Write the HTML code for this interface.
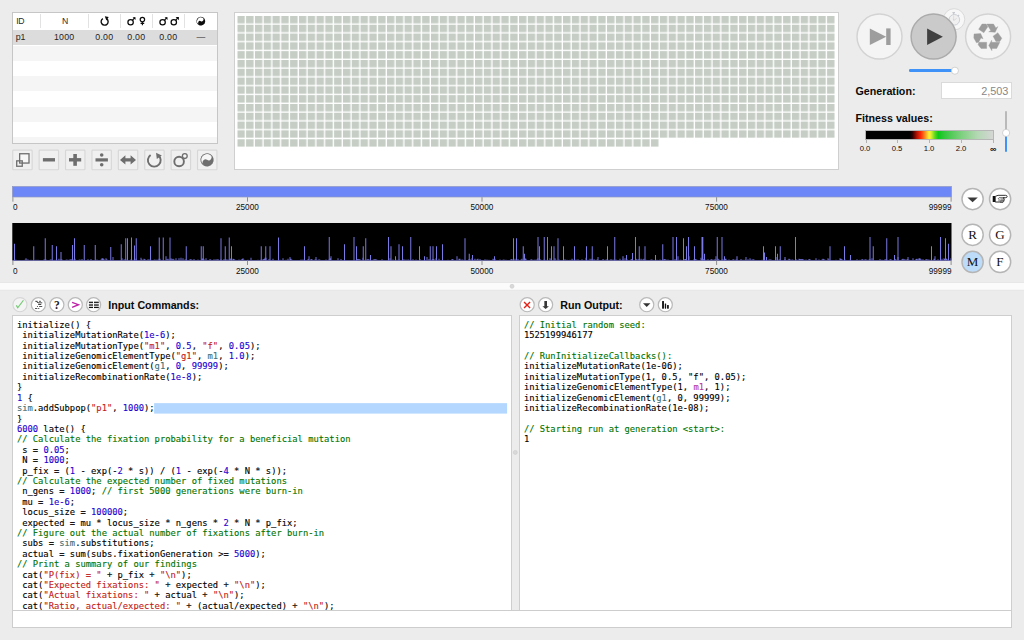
<!DOCTYPE html>
<html lang="en">
<head>
<meta charset="utf-8">
<title>SLiMgui</title>
<style>
*{box-sizing:border-box;margin:0;padding:0}
html,body{width:1024px;height:640px;overflow:hidden;background:#ececec}
body{position:relative;font-family:"Liberation Sans",sans-serif;color:#000;-webkit-font-smoothing:antialiased}
.abs{position:absolute}
/* population table */
#tbl{left:12px;top:12px;width:206px;height:132px;background:#fff;border:1px solid #c6c6c6;overflow:hidden}
#tbl .row{position:absolute;left:0;width:204px;height:15.2px}
#tbl .hd{position:absolute;top:0;height:16.9px;left:0;width:204px;background:#fff}
.colsep{position:absolute;top:1.3px;height:14px;width:1px;background:#e2e2e2}
.hdt{position:absolute;top:0;height:16.9px;line-height:17.4px;font-size:8.7px;letter-spacing:-0.3px;color:#2a2a2a;text-align:center}
.cell{position:absolute;top:0;height:14.7px;line-height:14.4px;font-size:8.8px;letter-spacing:0.2px;color:#1e1e1e;text-align:center}
/* population view */
#pop{left:234px;top:12px;width:605px;height:158px;background:#fff;border:1px solid #cfcfcf}
.lbl{position:absolute;font-weight:bold;font-size:10.7px;color:#0a0a0a;white-space:nowrap}
.tick{position:absolute;font-size:8.2px;color:#0c0c0c;white-space:nowrap;line-height:8px}
.ft{font-size:7.7px}
.pane{position:absolute;background:#fff;border:1px solid #cecece;overflow:hidden}
pre{font-family:"DejaVu Sans Mono","Liberation Mono",monospace;font-size:8.8px;line-height:10.4px;color:#000;position:absolute;left:3.9px;top:3.85px;white-space:pre;-webkit-text-stroke:0.12px}
.n{color:#1c00cf}.s{color:#c41a16}.c{color:#007400}.i{color:#3f6e74}.k{color:#b833a1}

</style>
</head>
<body>
<!-- population table -->
<div id="tbl" class="abs">
  <div class="hd">
    <div class="hdt" style="left:3.2px;width:20px;text-align:left">ID</div>
    <div class="hdt" style="left:28px;width:48px">N</div>
    <div class="colsep" style="left:26.8px"></div>
    <div class="colsep" style="left:74.9px"></div>
    <div class="colsep" style="left:106.9px"></div>
    <div class="colsep" style="left:138.9px"></div>
    <div class="colsep" style="left:170.9px"></div>
  </div>
  <div class="row" style="top:16.9px;height:14.7px;background:#dcdcdc">
    <div class="cell" style="left:2.8px;width:20px;text-align:left;letter-spacing:-0.2px">p1</div>
    <div class="cell" style="left:27.2px;width:48px">1000</div>
    <div class="cell" style="left:75.3px;width:32px">0.00</div>
    <div class="cell" style="left:107.3px;width:32px">0.00</div>
    <div class="cell" style="left:139.3px;width:32px">0.00</div>
    <div class="cell" style="left:172px;width:32px">—</div>
  </div>
  <div class="row" style="top:32.7px;background:#f5f5f5"></div>
  <div class="row" style="top:63.1px;background:#f5f5f5"></div>
  <div class="row" style="top:93.5px;background:#f5f5f5"></div>
  <div class="row" style="top:123.9px;background:#f5f5f5"></div>
</div>
<!-- table header icons -->
<svg class="abs" style="left:0;top:0" width="230" height="180" viewBox="0 0 230 180">
  <g id="hdicons" fill="none" stroke="#0c0c0c" stroke-width="1.35">
    <!-- cloning -->
    <path d="M102.9 18.6A3.5 3.5 0 1 0 106.8 18.9"/>
    <path d="M104.8 16.3l3.9 .8l-2.3 3.3z" fill="#0c0c0c" stroke="none"/>
    <!-- male female -->
    <circle cx="130.6" cy="22.3" r="2.7" stroke-width="1.25"/><path d="M132.4 20.3l2.4-2.6" stroke-width="1.1"/><path d="M132.6 17.2h2.9v2.9z" fill="#0c0c0c" stroke="none"/>
    <circle cx="142.4" cy="19.6" r="2.2" stroke-width="1.2"/><path d="M142.4 21.8v3.4M140.6 23.4h3.6" stroke-width="1.1"/>
    <!-- male male -->
    <circle cx="162.6" cy="22.3" r="2.7" stroke-width="1.25"/><path d="M164.4 20.3l2.4-2.6" stroke-width="1.1"/><path d="M164.6 17.2h2.9v2.9z" fill="#0c0c0c" stroke="none"/>
    <circle cx="173.8" cy="22.3" r="2.7" stroke-width="1.25"/><path d="M175.6 20.3l2.4-2.6" stroke-width="1.1"/><path d="M175.6 17h3.3v3.3z" fill="#0c0c0c" stroke="none"/>
    <!-- yin yang -->
    <g transform="translate(200.85 21.15) rotate(28)" stroke="none"><circle r="4.35" fill="#0c0c0c"/><path d="M0 -3.75A3.75 3.75 0 0 0 0 3.75A1.87 1.87 0 0 1 0 0A1.87 1.87 0 0 0 0 -3.75Z" fill="#fff"/></g>
  </g>
</svg>
<!-- square buttons -->
<svg class="abs" style="left:0;top:140px" width="230" height="40" viewBox="0 140 230 40">
  <rect x="12.75" y="150.1" width="19.4" height="19.65" rx="0.8" fill="#f0f0f0" stroke="#d7d7d7" stroke-width="1.15"/><rect x="39.15" y="150.1" width="19.4" height="19.65" rx="0.8" fill="#f0f0f0" stroke="#d7d7d7" stroke-width="1.15"/><rect x="65.55" y="150.1" width="19.4" height="19.65" rx="0.8" fill="#f0f0f0" stroke="#d7d7d7" stroke-width="1.15"/><rect x="91.95" y="150.1" width="19.4" height="19.65" rx="0.8" fill="#f0f0f0" stroke="#d7d7d7" stroke-width="1.15"/><rect x="118.35" y="150.1" width="19.4" height="19.65" rx="0.8" fill="#f0f0f0" stroke="#d7d7d7" stroke-width="1.15"/><rect x="144.75" y="150.1" width="19.4" height="19.65" rx="0.8" fill="#f0f0f0" stroke="#d7d7d7" stroke-width="1.15"/><rect x="171.15" y="150.1" width="19.4" height="19.65" rx="0.8" fill="#f0f0f0" stroke="#d7d7d7" stroke-width="1.15"/><rect x="197.55" y="150.1" width="19.4" height="19.65" rx="0.8" fill="#f0f0f0" stroke="#d7d7d7" stroke-width="1.15"/>
  <g fill="#6e6e6e" stroke="none">
    <rect x="19.65" y="153.75" width="9.35" height="9.3" fill="#f7f7f7" stroke="#6e6e6e" stroke-width="1.3"/>
    <rect x="16.7" y="160.85" width="5.55" height="5.4" fill="none" stroke="#6e6e6e" stroke-width="1.3"/>
    <rect x="42.9" y="158.1" width="12.1" height="3.4"/>
    <rect x="69" y="158.1" width="12.2" height="3.4"/><rect x="73.3" y="154" width="3.6" height="11.8"/>
    <rect x="95.5" y="158.3" width="12.4" height="3.2"/><circle cx="101.7" cy="155" r="1.8"/><circle cx="101.7" cy="164.7" r="1.8"/>
    <path d="M120 159.9l5.4-4.6v3h5.2v-3l5.4 4.6l-5.4 4.6v-3h-5.2v3z"/>
    <path d="M158.2 155.2A6.4 6.4 0 1 1 150.6 155" fill="none" stroke="#6e6e6e" stroke-width="1.9"/>
    <path d="M156 152.8l5.8 2.6l-5 3.6z"/>
    <circle cx="179.1" cy="161.5" r="4.8" fill="none" stroke="#6e6e6e" stroke-width="1.9"/>
    <circle cx="184.8" cy="156.1" r="2.4" fill="#f6f6f6" stroke="#6e6e6e" stroke-width="1.3"/>
    <g transform="translate(207.07 159.87) rotate(32)" stroke="none"><circle r="6.6" fill="#6e6e6e"/><path d="M0 -5.8A5.8 5.8 0 0 0 0 5.8A2.9 2.9 0 0 1 0 0A2.9 2.9 0 0 0 0 -5.8Z" fill="#f6f6f6"/></g>
  </g>
</svg>
<!-- population squares -->
<div id="pop" class="abs"></div>
<svg class="abs" style="left:234px;top:12px" width="606" height="158" viewBox="234 12 606 158">
  <defs><pattern id="sqp" x="237.3" y="15.95" width="8.803" height="8.8" patternUnits="userSpaceOnUse"><rect x="0" y="0" width="7.45" height="7.45" fill="#c5cdc5"/></pattern></defs>
  <rect x="237.3" y="15.95" width="597.6" height="122" fill="url(#sqp)"/>
  <rect x="237.3" y="139.15" width="421.6" height="8" fill="url(#sqp)"/>
</svg>
<!-- big round buttons -->
<svg class="abs" style="left:850px;top:0px" width="170" height="68" viewBox="850 0 170 68">
  <circle cx="954.1" cy="19.3" r="10.65" fill="#f7f7f7" stroke="#dadada" stroke-width="1"/>
  <g fill="none" stroke="#c6c9d0" stroke-width="0.9"><circle cx="954.3" cy="19.8" r="5.3" fill="#f0f0f1"/><path d="M953.6 14.6v-1.6M958 16.1l1.1-1.1" stroke-width="1.1"/><path d="M952.4 12.6h2.6" stroke-width="1.3"/><path d="M953.6 15.6v5.4" stroke="#f3c2ba" stroke-width="0.55"/><path d="M954.5 20l2.2-1.7M954.5 20l-1.7-.9" stroke="#c9c9cc" stroke-width="0.6"/></g>
  <circle cx="879.5" cy="36.6" r="22.5" fill="#f4f4f4" stroke="#d3d3d3" stroke-width="1.5"/>
  <circle cx="933.6" cy="36.6" r="22.5" fill="#cacaca" stroke="#ababab" stroke-width="1.5"/>
  <circle cx="988.1" cy="36.6" r="22.5" fill="#f4f4f4" stroke="#d3d3d3" stroke-width="1.5"/>
  <path d="M869.8 28.4l16.4 8.3l-16.4 8.3z" fill="#9d9d9d"/><rect x="886.2" y="28.4" width="4.4" height="16.6" fill="#9d9d9d"/>
  <path d="M927.1 28.4l15.8 8.3l-15.8 8.3z" fill="#404040"/>
  <g id="recyc" fill="#9c9c9c" stroke="#9c9c9c" stroke-width="4" stroke-linejoin="round" transform="translate(960 8) scale(0.0875)">
    <polygon points="213,243 252,183 298,183 318,215 272,283"/>
    <polygon points="305,183 383,183 410,228 433,212 402,278 328,272 352,258"/>
    <polygon points="432,282 478,345 455,382 410,382 378,322"/>
    <polygon points="362,368 362,392 455,392 420,462 365,462 365,488 328,428"/>
    <polygon points="160,296 236,292 264,352 240,343 213,390 188,398 158,342"/>
    <polygon points="215,392 305,392 305,462 240,462 207,420"/>
  </g>
</svg>
<!-- speed slider -->
<div class="abs" style="left:909px;top:69.4px;width:44px;height:2.4px;border-radius:1.2px;background:#3f92f7"></div>
<svg class="abs" style="left:948px;top:64px" width="14" height="14" viewBox="948 64 14 14"><circle cx="954.9" cy="70.7" r="3.55" fill="#fff" stroke="#c2c2c2" stroke-width=".7"/></svg>
<!-- generation -->
<div class="lbl" style="left:855.5px;top:84.5px;line-height:13px">Generation:</div>
<div class="abs" style="left:941px;top:82px;width:71px;height:17px;background:#fff;border:1px solid #dadada"></div>
<div class="abs" style="left:945px;top:83.5px;width:63.4px;text-align:right;font-size:10.9px;line-height:14px;color:#878787">2,503</div>
<div class="lbl" style="left:855.5px;top:111.5px;line-height:13px">Fitness values:</div>
<!-- fitness colour bar -->
<div class="abs" style="left:865px;top:130.2px;width:128.9px;height:9.6px;border:1px solid #b6b6b6;background:linear-gradient(to right,#000 0%,#000 34.5%,#2c0000 36.5%,#b41000 40%,#ff2a08 43.2%,#ff9220 46.5%,#fff234 49.6%,#dcf030 51.2%,#5cd820 54.2%,#0cc818 57%,#36c83e 62%,#7ed07e 75%,#b4d8b4 88%,#d4d6d4 100%)"></div>
<div class="abs" style="left:865.6px;top:139.5px;width:1px;height:3.4px;background:#b0b0b0"></div>
<div class="abs" style="left:897px;top:139.5px;width:1px;height:3.4px;background:#b4b4b4"></div>
<div class="abs" style="left:929px;top:139.5px;width:1px;height:3.4px;background:#b4b4b4"></div>
<div class="abs" style="left:961px;top:139.5px;width:1px;height:3.4px;background:#b4b4b4"></div>
<div class="abs" style="left:993px;top:139.5px;width:1px;height:3.4px;background:#b4b4b4"></div>
<div class="tick ft" style="left:855px;top:145.1px;width:20px;text-align:center">0.0</div>
<div class="tick ft" style="left:887px;top:145.1px;width:20px;text-align:center">0.5</div>
<div class="tick ft" style="left:919px;top:145.1px;width:20px;text-align:center">1.0</div>
<div class="tick ft" style="left:951px;top:145.1px;width:20px;text-align:center">2.0</div>
<div class="tick" style="left:983.2px;top:145.3px;width:20px;text-align:center;font-size:9px;font-weight:bold">∞</div>
<!-- fitness vertical slider -->
<div class="abs" style="left:1005px;top:111px;width:2.2px;height:22px;border-radius:1px;background:#b9b9b9"></div>
<div class="abs" style="left:1005px;top:133px;width:2.2px;height:19px;border-radius:1px;background:#3f92f7"></div>
<svg class="abs" style="left:999px;top:126px" width="14" height="14" viewBox="999 126 14 14"><circle cx="1006.1" cy="132.9" r="3.6" fill="#fff" stroke="#c2c2c2" stroke-width=".7"/></svg>
<!-- chromosome overview -->
<svg class="abs" style="left:0;top:180px" width="1024" height="95" viewBox="0 180 1024 95"><rect x="12.4" y="186.5" width="939.2" height="10.5" fill="#6e87f8" stroke="#8f98c0" stroke-width="0.7"/><rect x="12.3" y="223" width="939.2" height="37.6" fill="#000"/><path fill="#7b79e4" d="M14.00 243.75v16.75h1v-16.75zM33.25 246.25v14.25h1v-14.25zM44.75 238.25v22.25h1v-22.25zM51.75 245.00v15.50h1v-15.50zM56.00 246.25v14.25h1v-14.25zM60.50 252.00v8.50h1v-8.50zM72.00 245.00v15.50h1v-15.50zM74.00 238.25v22.25h1v-22.25zM83.75 245.00v15.50h1v-15.50zM94.75 245.00v15.50h1v-15.50zM110.25 247.00v13.50h1v-13.50zM120.75 244.25v16.25h1v-16.25zM125.25 238.25v22.25h1v-22.25zM127.00 238.25v22.25h1v-22.25zM131.00 237.50v23.00h1v-23.00zM134.00 245.50v15.00h1v-15.00zM135.75 238.25v22.25h1v-22.25zM150.00 246.25v14.25h1v-14.25zM158.75 237.50v23.00h1v-23.00zM162.75 237.50v23.00h1v-23.00zM169.50 237.50v23.00h1v-23.00zM185.75 246.25v14.25h1v-14.25zM200.75 246.25v14.25h1v-14.25zM202.75 246.25v14.25h1v-14.25zM220.50 238.25v22.25h1v-22.25zM224.75 246.25v14.25h1v-14.25zM228.75 237.50v23.00h1v-23.00zM231.00 246.25v14.25h1v-14.25zM260.75 246.25v14.25h1v-14.25zM265.25 246.25v14.25h1v-14.25zM269.50 246.25v14.25h1v-14.25zM278.00 237.50v23.00h1v-23.00zM304.00 246.25v14.25h1v-14.25zM328.75 237.00v23.50h1v-23.50zM344.00 244.25v16.25h1v-16.25zM353.50 237.00v23.50h1v-23.50zM356.00 246.25v14.25h1v-14.25zM362.75 246.25v14.25h1v-14.25zM365.25 238.25v22.25h1v-22.25zM370.00 255.00v5.50h1v-5.50zM388.00 237.00v23.50h1v-23.50zM390.50 246.25v14.25h1v-14.25zM395.00 256.25v4.25h1v-4.25zM398.50 244.25v16.25h1v-16.25zM402.00 246.25v14.25h1v-14.25zM410.25 237.00v23.50h1v-23.50zM419.00 246.25v14.25h1v-14.25zM424.00 256.25v4.25h1v-4.25zM429.75 246.25v14.25h1v-14.25zM432.50 246.25v14.25h1v-14.25zM436.00 246.25v14.25h1v-14.25zM442.00 244.25v16.25h1v-16.25zM464.50 238.25v22.25h1v-22.25zM468.75 253.75v6.75h1v-6.75zM472.00 255.00v5.50h1v-5.50zM494.00 256.25v4.25h1v-4.25zM513.00 238.25v22.25h1v-22.25zM516.00 238.25v22.25h1v-22.25zM522.75 246.25v14.25h1v-14.25zM524.00 253.75v6.75h1v-6.75zM537.50 237.00v23.50h1v-23.50zM539.00 246.25v14.25h1v-14.25zM543.75 237.00v23.50h1v-23.50zM547.00 237.00v23.50h1v-23.50zM551.00 246.25v14.25h1v-14.25zM553.50 246.25v14.25h1v-14.25zM557.50 238.25v22.25h1v-22.25zM563.00 246.25v14.25h1v-14.25zM574.00 246.25v14.25h1v-14.25zM586.00 246.25v14.25h1v-14.25zM591.75 246.25v14.25h1v-14.25zM607.00 246.25v14.25h1v-14.25zM614.25 237.00v23.50h1v-23.50zM622.50 256.25v4.25h1v-4.25zM626.00 255.00v5.50h1v-5.50zM632.00 253.00v7.50h1v-7.50zM635.00 237.00v23.50h1v-23.50zM638.75 246.25v14.25h1v-14.25zM644.50 246.25v14.25h1v-14.25zM655.00 255.00v5.50h1v-5.50zM662.25 244.25v16.25h1v-16.25zM672.50 237.00v23.50h1v-23.50zM676.00 237.00v23.50h1v-23.50zM683.00 238.25v22.25h1v-22.25zM686.00 246.25v14.25h1v-14.25zM688.00 237.00v23.50h1v-23.50zM694.00 246.25v14.25h1v-14.25zM701.50 237.00v23.50h1v-23.50zM702.30 237.00v23.50h1v-23.50zM704.00 253.75v6.75h1v-6.75zM716.75 237.00v23.50h1v-23.50zM721.50 237.00v23.50h1v-23.50zM724.00 256.25v4.25h1v-4.25zM736.50 256.25v4.25h1v-4.25zM763.00 246.25v14.25h1v-14.25zM764.00 252.50v8.00h1v-8.00zM766.00 257.00v3.50h1v-3.50zM775.00 246.25v14.25h1v-14.25zM777.00 253.75v6.75h1v-6.75zM779.75 246.25v14.25h1v-14.25zM784.50 257.00v3.50h1v-3.50zM795.00 237.00v23.50h1v-23.50zM829.50 246.25v14.25h1v-14.25zM844.00 246.25v14.25h1v-14.25zM850.00 255.00v5.50h1v-5.50zM869.50 237.00v23.50h1v-23.50zM872.75 246.25v14.25h1v-14.25zM886.25 238.25v22.25h1v-22.25zM894.00 255.00v5.50h1v-5.50zM897.50 237.00v23.50h1v-23.50zM931.00 246.25v14.25h1v-14.25zM940.00 237.00v23.50h1v-23.50zM945.00 238.25v22.25h1v-22.25zM948.00 243.75v16.75h1v-16.75z"/><path fill="#6f6dd6" d="M12.5 260.5L12.5 259.95L13.5 259.95L13.5 259.95L14.5 259.95L14.5 259.70L15.5 259.70L15.5 259.70L16.5 259.70L16.5 259.95L17.5 259.95L17.5 259.95L18.5 259.95L18.5 259.95L19.5 259.95L19.5 259.95L20.5 259.95L20.5 259.95L21.5 259.95L21.5 259.95L22.5 259.95L22.5 259.95L23.5 259.95L23.5 259.95L24.5 259.95L24.5 259.70L25.5 259.70L25.5 258.30L26.5 258.30L26.5 259.70L27.5 259.70L27.5 259.50L28.5 259.50L28.5 259.95L29.5 259.95L29.5 259.95L30.5 259.95L30.5 259.70L31.5 259.70L31.5 259.95L32.5 259.95L32.5 259.95L33.5 259.95L33.5 259.95L34.5 259.95L34.5 259.95L35.5 259.95L35.5 259.70L36.5 259.70L36.5 259.95L37.5 259.95L37.5 259.70L38.5 259.70L38.5 259.95L39.5 259.95L39.5 259.95L40.5 259.95L40.5 259.95L41.5 259.95L41.5 259.95L42.5 259.95L42.5 259.95L43.5 259.95L43.5 259.50L44.5 259.50L44.5 259.50L45.5 259.50L45.5 259.50L46.5 259.50L46.5 259.95L47.5 259.95L47.5 259.95L48.5 259.95L48.5 259.95L49.5 259.95L49.5 259.70L50.5 259.70L50.5 259.30L51.5 259.30L51.5 259.95L52.5 259.95L52.5 259.95L53.5 259.95L53.5 259.95L54.5 259.95L54.5 259.70L55.5 259.70L55.5 259.95L56.5 259.95L56.5 259.95L57.5 259.95L57.5 259.70L58.5 259.70L58.5 258.70L59.5 258.70L59.5 259.95L60.5 259.95L60.5 259.30L61.5 259.30L61.5 259.50L62.5 259.50L62.5 259.95L63.5 259.95L63.5 259.95L64.5 259.95L64.5 259.95L65.5 259.95L65.5 259.70L66.5 259.70L66.5 259.50L67.5 259.50L67.5 259.95L68.5 259.95L68.5 259.70L69.5 259.70L69.5 259.50L70.5 259.50L70.5 259.30L71.5 259.30L71.5 259.50L72.5 259.50L72.5 259.30L73.5 259.30L73.5 259.95L74.5 259.95L74.5 258.70L75.5 258.70L75.5 259.95L76.5 259.95L76.5 259.95L77.5 259.95L77.5 259.95L78.5 259.95L78.5 259.70L79.5 259.70L79.5 259.50L80.5 259.50L80.5 259.95L81.5 259.95L81.5 259.00L82.5 259.00L82.5 259.95L83.5 259.95L83.5 259.95L84.5 259.95L84.5 259.95L85.5 259.95L85.5 259.95L86.5 259.95L86.5 259.95L87.5 259.95L87.5 259.30L88.5 259.30L88.5 259.95L89.5 259.95L89.5 259.95L90.5 259.95L90.5 259.00L91.5 259.00L91.5 259.95L92.5 259.95L92.5 259.95L93.5 259.95L93.5 259.95L94.5 259.95L94.5 259.95L95.5 259.95L95.5 259.95L96.5 259.95L96.5 259.50L97.5 259.50L97.5 259.95L98.5 259.95L98.5 259.95L99.5 259.95L99.5 259.95L100.5 259.95L100.5 259.50L101.5 259.50L101.5 258.30L102.5 258.30L102.5 258.30L103.5 258.30L103.5 259.30L104.5 259.30L104.5 259.95L105.5 259.95L105.5 258.30L106.5 258.30L106.5 259.50L107.5 259.50L107.5 259.95L108.5 259.95L108.5 259.95L109.5 259.95L109.5 259.95L110.5 259.95L110.5 259.95L111.5 259.95L111.5 259.95L112.5 259.95L112.5 257.10L113.5 257.10L113.5 259.95L114.5 259.95L114.5 259.95L115.5 259.95L115.5 259.95L116.5 259.95L116.5 259.95L117.5 259.95L117.5 259.95L118.5 259.95L118.5 259.95L119.5 259.95L119.5 259.95L120.5 259.95L120.5 259.95L121.5 259.95L121.5 258.30L122.5 258.30L122.5 259.95L123.5 259.95L123.5 259.50L124.5 259.50L124.5 259.50L125.5 259.50L125.5 259.95L126.5 259.95L126.5 259.50L127.5 259.50L127.5 259.95L128.5 259.95L128.5 259.95L129.5 259.95L129.5 259.95L130.5 259.95L130.5 259.30L131.5 259.30L131.5 259.95L132.5 259.95L132.5 259.70L133.5 259.70L133.5 259.95L134.5 259.95L134.5 259.95L135.5 259.95L135.5 258.70L136.5 258.70L136.5 259.95L137.5 259.95L137.5 259.95L138.5 259.95L138.5 259.95L139.5 259.95L139.5 259.95L140.5 259.95L140.5 257.70L141.5 257.70L141.5 259.50L142.5 259.50L142.5 259.95L143.5 259.95L143.5 258.70L144.5 258.70L144.5 259.30L145.5 259.30L145.5 259.95L146.5 259.95L146.5 259.95L147.5 259.95L147.5 259.30L148.5 259.30L148.5 259.70L149.5 259.70L149.5 259.50L150.5 259.50L150.5 259.70L151.5 259.70L151.5 259.95L152.5 259.95L152.5 259.95L153.5 259.95L153.5 259.70L154.5 259.70L154.5 259.50L155.5 259.50L155.5 259.95L156.5 259.95L156.5 259.50L157.5 259.50L157.5 259.95L158.5 259.95L158.5 258.70L159.5 258.70L159.5 258.70L160.5 258.70L160.5 259.95L161.5 259.95L161.5 259.95L162.5 259.95L162.5 259.95L163.5 259.95L163.5 259.95L164.5 259.95L164.5 259.95L165.5 259.95L165.5 256.30L166.5 256.30L166.5 259.50L167.5 259.50L167.5 258.70L168.5 258.70L168.5 259.70L169.5 259.70L169.5 259.70L170.5 259.70L170.5 258.30L171.5 258.30L171.5 259.50L172.5 259.50L172.5 258.70L173.5 258.70L173.5 259.50L174.5 259.50L174.5 259.95L175.5 259.95L175.5 258.30L176.5 258.30L176.5 259.95L177.5 259.95L177.5 259.95L178.5 259.95L178.5 258.30L179.5 258.30L179.5 259.95L180.5 259.95L180.5 257.70L181.5 257.70L181.5 259.95L182.5 259.95L182.5 258.30L183.5 258.30L183.5 259.95L184.5 259.95L184.5 259.50L185.5 259.50L185.5 259.50L186.5 259.50L186.5 259.95L187.5 259.95L187.5 259.95L188.5 259.95L188.5 259.95L189.5 259.95L189.5 259.30L190.5 259.30L190.5 259.30L191.5 259.30L191.5 259.70L192.5 259.70L192.5 259.95L193.5 259.95L193.5 259.00L194.5 259.00L194.5 259.95L195.5 259.95L195.5 259.95L196.5 259.95L196.5 259.95L197.5 259.95L197.5 259.50L198.5 259.50L198.5 259.95L199.5 259.95L199.5 259.95L200.5 259.95L200.5 259.95L201.5 259.95L201.5 258.70L202.5 258.70L202.5 258.30L203.5 258.30L203.5 259.30L204.5 259.30L204.5 259.95L205.5 259.95L205.5 258.30L206.5 258.30L206.5 259.95L207.5 259.95L207.5 259.95L208.5 259.95L208.5 259.95L209.5 259.95L209.5 259.00L210.5 259.00L210.5 259.70L211.5 259.70L211.5 259.95L212.5 259.95L212.5 259.95L213.5 259.95L213.5 259.30L214.5 259.30L214.5 259.95L215.5 259.95L215.5 259.30L216.5 259.30L216.5 259.70L217.5 259.70L217.5 259.00L218.5 259.00L218.5 259.95L219.5 259.95L219.5 259.95L220.5 259.95L220.5 259.30L221.5 259.30L221.5 259.95L222.5 259.95L222.5 259.95L223.5 259.95L223.5 259.00L224.5 259.00L224.5 259.95L225.5 259.95L225.5 259.30L226.5 259.30L226.5 259.70L227.5 259.70L227.5 259.50L228.5 259.50L228.5 259.95L229.5 259.95L229.5 259.30L230.5 259.30L230.5 258.30L231.5 258.30L231.5 259.95L232.5 259.95L232.5 258.70L233.5 258.70L233.5 259.00L234.5 259.00L234.5 259.70L235.5 259.70L235.5 259.95L236.5 259.95L236.5 259.95L237.5 259.95L237.5 259.95L238.5 259.95L238.5 259.50L239.5 259.50L239.5 259.95L240.5 259.95L240.5 259.70L241.5 259.70L241.5 259.00L242.5 259.00L242.5 258.30L243.5 258.30L243.5 259.70L244.5 259.70L244.5 259.95L245.5 259.95L245.5 259.95L246.5 259.95L246.5 259.95L247.5 259.95L247.5 259.70L248.5 259.70L248.5 259.95L249.5 259.95L249.5 259.95L250.5 259.95L250.5 257.70L251.5 257.70L251.5 259.95L252.5 259.95L252.5 259.95L253.5 259.95L253.5 259.95L254.5 259.95L254.5 259.95L255.5 259.95L255.5 259.95L256.5 259.95L256.5 259.95L257.5 259.95L257.5 259.70L258.5 259.70L258.5 259.95L259.5 259.95L259.5 259.95L260.5 259.95L260.5 259.50L261.5 259.50L261.5 259.95L262.5 259.95L262.5 259.30L263.5 259.30L263.5 259.00L264.5 259.00L264.5 257.70L265.5 257.70L265.5 257.70L266.5 257.70L266.5 259.95L267.5 259.95L267.5 259.95L268.5 259.95L268.5 259.00L269.5 259.00L269.5 259.95L270.5 259.95L270.5 259.95L271.5 259.95L271.5 259.95L272.5 259.95L272.5 258.70L273.5 258.70L273.5 259.95L274.5 259.95L274.5 259.95L275.5 259.95L275.5 259.95L276.5 259.95L276.5 259.95L277.5 259.95L277.5 259.95L278.5 259.95L278.5 259.95L279.5 259.95L279.5 259.70L280.5 259.70L280.5 259.95L281.5 259.95L281.5 259.95L282.5 259.95L282.5 258.30L283.5 258.30L283.5 259.95L284.5 259.95L284.5 259.95L285.5 259.95L285.5 259.70L286.5 259.70L286.5 259.95L287.5 259.95L287.5 258.70L288.5 258.70L288.5 259.95L289.5 259.95L289.5 257.10L290.5 257.10L290.5 258.70L291.5 258.70L291.5 259.70L292.5 259.70L292.5 259.95L293.5 259.95L293.5 259.95L294.5 259.95L294.5 259.95L295.5 259.95L295.5 259.95L296.5 259.95L296.5 259.95L297.5 259.95L297.5 259.95L298.5 259.95L298.5 259.95L299.5 259.95L299.5 259.95L300.5 259.95L300.5 259.50L301.5 259.50L301.5 259.95L302.5 259.95L302.5 259.50L303.5 259.50L303.5 259.95L304.5 259.95L304.5 259.95L305.5 259.95L305.5 259.95L306.5 259.95L306.5 259.95L307.5 259.95L307.5 259.30L308.5 259.30L308.5 256.30L309.5 256.30L309.5 259.95L310.5 259.95L310.5 259.00L311.5 259.00L311.5 259.30L312.5 259.30L312.5 259.95L313.5 259.95L313.5 259.95L314.5 259.95L314.5 259.50L315.5 259.50L315.5 257.10L316.5 257.10L316.5 259.70L317.5 259.70L317.5 259.95L318.5 259.95L318.5 259.30L319.5 259.30L319.5 259.70L320.5 259.70L320.5 259.95L321.5 259.95L321.5 259.95L322.5 259.95L322.5 259.95L323.5 259.95L323.5 259.95L324.5 259.95L324.5 259.95L325.5 259.95L325.5 259.50L326.5 259.50L326.5 259.95L327.5 259.95L327.5 259.95L328.5 259.95L328.5 259.50L329.5 259.50L329.5 258.30L330.5 258.30L330.5 256.30L331.5 256.30L331.5 259.95L332.5 259.95L332.5 259.95L333.5 259.95L333.5 259.95L334.5 259.95L334.5 259.95L335.5 259.95L335.5 259.95L336.5 259.95L336.5 259.95L337.5 259.95L337.5 258.30L338.5 258.30L338.5 259.95L339.5 259.95L339.5 259.95L340.5 259.95L340.5 259.00L341.5 259.00L341.5 259.95L342.5 259.95L342.5 259.95L343.5 259.95L343.5 259.95L344.5 259.95L344.5 259.95L345.5 259.95L345.5 259.95L346.5 259.95L346.5 259.95L347.5 259.95L347.5 259.95L348.5 259.95L348.5 259.95L349.5 259.95L349.5 259.95L350.5 259.95L350.5 259.95L351.5 259.95L351.5 259.95L352.5 259.95L352.5 259.95L353.5 259.95L353.5 259.95L354.5 259.95L354.5 259.95L355.5 259.95L355.5 259.95L356.5 259.95L356.5 259.30L357.5 259.30L357.5 259.00L358.5 259.00L358.5 259.30L359.5 259.30L359.5 259.30L360.5 259.30L360.5 259.95L361.5 259.95L361.5 259.95L362.5 259.95L362.5 257.70L363.5 257.70L363.5 259.95L364.5 259.95L364.5 259.70L365.5 259.70L365.5 259.95L366.5 259.95L366.5 259.30L367.5 259.30L367.5 259.30L368.5 259.30L368.5 259.30L369.5 259.30L369.5 259.95L370.5 259.95L370.5 259.95L371.5 259.95L371.5 259.95L372.5 259.95L372.5 259.70L373.5 259.70L373.5 259.30L374.5 259.30L374.5 259.30L375.5 259.30L375.5 259.30L376.5 259.30L376.5 259.70L377.5 259.70L377.5 259.95L378.5 259.95L378.5 259.95L379.5 259.95L379.5 259.95L380.5 259.95L380.5 259.95L381.5 259.95L381.5 259.30L382.5 259.30L382.5 259.95L383.5 259.95L383.5 259.95L384.5 259.95L384.5 259.95L385.5 259.95L385.5 259.95L386.5 259.95L386.5 259.95L387.5 259.95L387.5 259.95L388.5 259.95L388.5 259.95L389.5 259.95L389.5 258.30L390.5 258.30L390.5 259.95L391.5 259.95L391.5 259.95L392.5 259.95L392.5 259.50L393.5 259.50L393.5 259.95L394.5 259.95L394.5 259.95L395.5 259.95L395.5 259.95L396.5 259.95L396.5 259.70L397.5 259.70L397.5 259.95L398.5 259.95L398.5 259.50L399.5 259.50L399.5 259.95L400.5 259.95L400.5 259.95L401.5 259.95L401.5 259.95L402.5 259.95L402.5 259.70L403.5 259.70L403.5 259.30L404.5 259.30L404.5 259.95L405.5 259.95L405.5 259.50L406.5 259.50L406.5 259.95L407.5 259.95L407.5 259.50L408.5 259.50L408.5 259.70L409.5 259.70L409.5 259.95L410.5 259.95L410.5 259.95L411.5 259.95L411.5 259.95L412.5 259.95L412.5 259.30L413.5 259.30L413.5 259.95L414.5 259.95L414.5 259.95L415.5 259.95L415.5 259.50L416.5 259.50L416.5 259.95L417.5 259.95L417.5 259.95L418.5 259.95L418.5 259.95L419.5 259.95L419.5 259.00L420.5 259.00L420.5 259.95L421.5 259.95L421.5 259.95L422.5 259.95L422.5 259.95L423.5 259.95L423.5 259.95L424.5 259.95L424.5 259.95L425.5 259.95L425.5 259.95L426.5 259.95L426.5 257.10L427.5 257.10L427.5 259.95L428.5 259.95L428.5 259.00L429.5 259.00L429.5 259.95L430.5 259.95L430.5 259.95L431.5 259.95L431.5 259.50L432.5 259.50L432.5 259.00L433.5 259.00L433.5 259.30L434.5 259.30L434.5 259.95L435.5 259.95L435.5 258.30L436.5 258.30L436.5 259.95L437.5 259.95L437.5 259.95L438.5 259.95L438.5 258.70L439.5 258.70L439.5 259.95L440.5 259.95L440.5 259.95L441.5 259.95L441.5 259.95L442.5 259.95L442.5 259.95L443.5 259.95L443.5 259.95L444.5 259.95L444.5 259.95L445.5 259.95L445.5 259.95L446.5 259.95L446.5 259.95L447.5 259.95L447.5 259.70L448.5 259.70L448.5 259.95L449.5 259.95L449.5 259.95L450.5 259.95L450.5 259.95L451.5 259.95L451.5 259.00L452.5 259.00L452.5 259.30L453.5 259.30L453.5 259.95L454.5 259.95L454.5 259.95L455.5 259.95L455.5 259.95L456.5 259.95L456.5 256.30L457.5 256.30L457.5 259.95L458.5 259.95L458.5 258.70L459.5 258.70L459.5 258.70L460.5 258.70L460.5 259.95L461.5 259.95L461.5 259.50L462.5 259.50L462.5 259.70L463.5 259.70L463.5 259.95L464.5 259.95L464.5 259.95L465.5 259.95L465.5 259.95L466.5 259.95L466.5 259.95L467.5 259.95L467.5 259.95L468.5 259.95L468.5 259.00L469.5 259.00L469.5 259.30L470.5 259.30L470.5 259.95L471.5 259.95L471.5 258.30L472.5 258.30L472.5 259.95L473.5 259.95L473.5 259.70L474.5 259.70L474.5 258.70L475.5 258.70L475.5 259.95L476.5 259.95L476.5 259.30L477.5 259.30L477.5 258.70L478.5 258.70L478.5 259.95L479.5 259.95L479.5 259.00L480.5 259.00L480.5 259.95L481.5 259.95L481.5 259.95L482.5 259.95L482.5 259.95L483.5 259.95L483.5 259.95L484.5 259.95L484.5 259.30L485.5 259.30L485.5 259.95L486.5 259.95L486.5 259.50L487.5 259.50L487.5 259.95L488.5 259.95L488.5 259.70L489.5 259.70L489.5 259.95L490.5 259.95L490.5 259.95L491.5 259.95L491.5 259.95L492.5 259.95L492.5 258.70L493.5 258.70L493.5 259.50L494.5 259.50L494.5 258.70L495.5 258.70L495.5 259.95L496.5 259.95L496.5 259.95L497.5 259.95L497.5 259.95L498.5 259.95L498.5 259.95L499.5 259.95L499.5 259.50L500.5 259.50L500.5 259.95L501.5 259.95L501.5 259.95L502.5 259.95L502.5 259.70L503.5 259.70L503.5 259.50L504.5 259.50L504.5 259.95L505.5 259.95L505.5 259.70L506.5 259.70L506.5 259.95L507.5 259.95L507.5 259.95L508.5 259.95L508.5 259.95L509.5 259.95L509.5 259.95L510.5 259.95L510.5 259.00L511.5 259.00L511.5 259.30L512.5 259.30L512.5 259.70L513.5 259.70L513.5 259.95L514.5 259.95L514.5 258.70L515.5 258.70L515.5 259.95L516.5 259.95L516.5 259.95L517.5 259.95L517.5 259.00L518.5 259.00L518.5 259.95L519.5 259.95L519.5 259.95L520.5 259.95L520.5 259.50L521.5 259.50L521.5 258.70L522.5 258.70L522.5 259.95L523.5 259.95L523.5 259.95L524.5 259.95L524.5 258.30L525.5 258.30L525.5 258.70L526.5 258.70L526.5 259.95L527.5 259.95L527.5 259.95L528.5 259.95L528.5 259.95L529.5 259.95L529.5 259.95L530.5 259.95L530.5 259.30L531.5 259.30L531.5 259.50L532.5 259.50L532.5 259.95L533.5 259.95L533.5 259.70L534.5 259.70L534.5 259.70L535.5 259.70L535.5 259.70L536.5 259.70L536.5 259.50L537.5 259.50L537.5 258.30L538.5 258.30L538.5 259.95L539.5 259.95L539.5 259.30L540.5 259.30L540.5 259.70L541.5 259.70L541.5 259.95L542.5 259.95L542.5 259.95L543.5 259.95L543.5 259.50L544.5 259.50L544.5 259.95L545.5 259.95L545.5 259.70L546.5 259.70L546.5 259.95L547.5 259.95L547.5 259.95L548.5 259.95L548.5 259.95L549.5 259.95L549.5 258.30L550.5 258.30L550.5 259.70L551.5 259.70L551.5 259.95L552.5 259.95L552.5 259.95L553.5 259.95L553.5 259.95L554.5 259.95L554.5 258.30L555.5 258.30L555.5 259.70L556.5 259.70L556.5 259.95L557.5 259.95L557.5 259.95L558.5 259.95L558.5 259.50L559.5 259.50L559.5 259.95L560.5 259.95L560.5 259.95L561.5 259.95L561.5 259.95L562.5 259.95L562.5 259.95L563.5 259.95L563.5 259.95L564.5 259.95L564.5 259.30L565.5 259.30L565.5 259.95L566.5 259.95L566.5 259.70L567.5 259.70L567.5 259.95L568.5 259.95L568.5 259.95L569.5 259.95L569.5 259.70L570.5 259.70L570.5 259.95L571.5 259.95L571.5 258.70L572.5 258.70L572.5 259.70L573.5 259.70L573.5 259.95L574.5 259.95L574.5 259.95L575.5 259.95L575.5 259.50L576.5 259.50L576.5 259.95L577.5 259.95L577.5 259.30L578.5 259.30L578.5 259.95L579.5 259.95L579.5 259.95L580.5 259.95L580.5 259.95L581.5 259.95L581.5 259.30L582.5 259.30L582.5 259.95L583.5 259.95L583.5 259.95L584.5 259.95L584.5 259.95L585.5 259.95L585.5 257.70L586.5 257.70L586.5 259.95L587.5 259.95L587.5 259.70L588.5 259.70L588.5 259.95L589.5 259.95L589.5 258.70L590.5 258.70L590.5 259.70L591.5 259.70L591.5 258.70L592.5 258.70L592.5 259.95L593.5 259.95L593.5 259.30L594.5 259.30L594.5 259.70L595.5 259.70L595.5 259.95L596.5 259.95L596.5 259.50L597.5 259.50L597.5 257.10L598.5 257.10L598.5 259.95L599.5 259.95L599.5 259.95L600.5 259.95L600.5 259.95L601.5 259.95L601.5 259.95L602.5 259.95L602.5 259.00L603.5 259.00L603.5 259.70L604.5 259.70L604.5 259.95L605.5 259.95L605.5 259.50L606.5 259.50L606.5 259.50L607.5 259.50L607.5 259.95L608.5 259.95L608.5 259.70L609.5 259.70L609.5 259.95L610.5 259.95L610.5 259.00L611.5 259.00L611.5 259.95L612.5 259.95L612.5 259.50L613.5 259.50L613.5 259.95L614.5 259.95L614.5 259.95L615.5 259.95L615.5 259.50L616.5 259.50L616.5 259.95L617.5 259.95L617.5 259.95L618.5 259.95L618.5 259.95L619.5 259.95L619.5 258.70L620.5 258.70L620.5 259.95L621.5 259.95L621.5 259.95L622.5 259.95L622.5 259.50L623.5 259.50L623.5 259.95L624.5 259.95L624.5 258.30L625.5 258.30L625.5 259.95L626.5 259.95L626.5 259.30L627.5 259.30L627.5 259.95L628.5 259.95L628.5 259.95L629.5 259.95L629.5 259.95L630.5 259.95L630.5 259.30L631.5 259.30L631.5 259.00L632.5 259.00L632.5 259.95L633.5 259.95L633.5 259.95L634.5 259.95L634.5 259.95L635.5 259.95L635.5 258.70L636.5 258.70L636.5 259.50L637.5 259.50L637.5 259.70L638.5 259.70L638.5 259.00L639.5 259.00L639.5 259.95L640.5 259.95L640.5 258.70L641.5 258.70L641.5 259.70L642.5 259.70L642.5 259.50L643.5 259.50L643.5 258.70L644.5 258.70L644.5 259.95L645.5 259.95L645.5 259.70L646.5 259.70L646.5 259.95L647.5 259.95L647.5 259.95L648.5 259.95L648.5 259.95L649.5 259.95L649.5 259.95L650.5 259.95L650.5 259.50L651.5 259.50L651.5 259.50L652.5 259.50L652.5 259.95L653.5 259.95L653.5 259.95L654.5 259.95L654.5 259.95L655.5 259.95L655.5 259.95L656.5 259.95L656.5 259.70L657.5 259.70L657.5 259.95L658.5 259.95L658.5 259.95L659.5 259.95L659.5 259.50L660.5 259.50L660.5 259.95L661.5 259.95L661.5 259.95L662.5 259.95L662.5 259.95L663.5 259.95L663.5 259.00L664.5 259.00L664.5 259.30L665.5 259.30L665.5 259.50L666.5 259.50L666.5 259.95L667.5 259.95L667.5 259.50L668.5 259.50L668.5 259.95L669.5 259.95L669.5 259.95L670.5 259.95L670.5 259.95L671.5 259.95L671.5 259.95L672.5 259.95L672.5 259.95L673.5 259.95L673.5 259.95L674.5 259.95L674.5 259.00L675.5 259.00L675.5 259.95L676.5 259.95L676.5 259.95L677.5 259.95L677.5 256.30L678.5 256.30L678.5 259.95L679.5 259.95L679.5 259.70L680.5 259.70L680.5 259.70L681.5 259.70L681.5 259.95L682.5 259.95L682.5 259.95L683.5 259.95L683.5 259.50L684.5 259.50L684.5 259.00L685.5 259.00L685.5 259.00L686.5 259.00L686.5 259.95L687.5 259.95L687.5 259.95L688.5 259.95L688.5 256.30L689.5 256.30L689.5 259.95L690.5 259.95L690.5 259.95L691.5 259.95L691.5 259.95L692.5 259.95L692.5 259.95L693.5 259.95L693.5 259.30L694.5 259.30L694.5 259.00L695.5 259.00L695.5 259.30L696.5 259.30L696.5 259.70L697.5 259.70L697.5 259.95L698.5 259.95L698.5 259.95L699.5 259.95L699.5 259.95L700.5 259.95L700.5 257.70L701.5 257.70L701.5 259.30L702.5 259.30L702.5 259.00L703.5 259.00L703.5 259.50L704.5 259.50L704.5 259.70L705.5 259.70L705.5 259.70L706.5 259.70L706.5 259.95L707.5 259.95L707.5 259.30L708.5 259.30L708.5 259.95L709.5 259.95L709.5 259.95L710.5 259.95L710.5 259.30L711.5 259.30L711.5 259.30L712.5 259.30L712.5 259.95L713.5 259.95L713.5 259.50L714.5 259.50L714.5 259.50L715.5 259.50L715.5 256.30L716.5 256.30L716.5 259.95L717.5 259.95L717.5 258.70L718.5 258.70L718.5 259.50L719.5 259.50L719.5 259.95L720.5 259.95L720.5 259.95L721.5 259.95L721.5 259.50L722.5 259.50L722.5 259.50L723.5 259.50L723.5 259.70L724.5 259.70L724.5 258.70L725.5 258.70L725.5 258.70L726.5 258.70L726.5 259.95L727.5 259.95L727.5 259.95L728.5 259.95L728.5 259.50L729.5 259.50L729.5 259.95L730.5 259.95L730.5 259.95L731.5 259.95L731.5 259.95L732.5 259.95L732.5 259.30L733.5 259.30L733.5 259.50L734.5 259.50L734.5 259.95L735.5 259.95L735.5 259.50L736.5 259.50L736.5 259.70L737.5 259.70L737.5 259.95L738.5 259.95L738.5 259.95L739.5 259.95L739.5 259.95L740.5 259.95L740.5 259.00L741.5 259.00L741.5 259.95L742.5 259.95L742.5 259.70L743.5 259.70L743.5 259.95L744.5 259.95L744.5 259.70L745.5 259.70L745.5 257.10L746.5 257.10L746.5 259.95L747.5 259.95L747.5 259.30L748.5 259.30L748.5 259.95L749.5 259.95L749.5 258.30L750.5 258.30L750.5 259.70L751.5 259.70L751.5 259.70L752.5 259.70L752.5 259.30L753.5 259.30L753.5 259.50L754.5 259.50L754.5 259.95L755.5 259.95L755.5 259.95L756.5 259.95L756.5 259.95L757.5 259.95L757.5 259.95L758.5 259.95L758.5 259.95L759.5 259.95L759.5 259.95L760.5 259.95L760.5 259.95L761.5 259.95L761.5 259.70L762.5 259.70L762.5 259.95L763.5 259.95L763.5 259.30L764.5 259.30L764.5 259.95L765.5 259.95L765.5 259.70L766.5 259.70L766.5 259.95L767.5 259.95L767.5 259.95L768.5 259.95L768.5 259.50L769.5 259.50L769.5 259.50L770.5 259.50L770.5 259.50L771.5 259.50L771.5 259.95L772.5 259.95L772.5 259.95L773.5 259.95L773.5 259.95L774.5 259.95L774.5 259.95L775.5 259.95L775.5 259.95L776.5 259.95L776.5 257.10L777.5 257.10L777.5 259.95L778.5 259.95L778.5 259.50L779.5 259.50L779.5 259.50L780.5 259.50L780.5 259.95L781.5 259.95L781.5 259.95L782.5 259.95L782.5 259.95L783.5 259.95L783.5 259.95L784.5 259.95L784.5 259.30L785.5 259.30L785.5 259.95L786.5 259.95L786.5 259.95L787.5 259.95L787.5 259.70L788.5 259.70L788.5 258.70L789.5 258.70L789.5 259.30L790.5 259.30L790.5 259.95L791.5 259.95L791.5 259.50L792.5 259.50L792.5 259.70L793.5 259.70L793.5 259.95L794.5 259.95L794.5 259.95L795.5 259.95L795.5 259.30L796.5 259.30L796.5 259.70L797.5 259.70L797.5 259.95L798.5 259.95L798.5 258.70L799.5 258.70L799.5 259.00L800.5 259.00L800.5 259.30L801.5 259.30L801.5 259.00L802.5 259.00L802.5 259.30L803.5 259.30L803.5 259.70L804.5 259.70L804.5 259.95L805.5 259.95L805.5 259.50L806.5 259.50L806.5 259.95L807.5 259.95L807.5 259.95L808.5 259.95L808.5 259.00L809.5 259.00L809.5 259.30L810.5 259.30L810.5 259.95L811.5 259.95L811.5 259.95L812.5 259.95L812.5 259.95L813.5 259.95L813.5 259.95L814.5 259.95L814.5 259.95L815.5 259.95L815.5 258.30L816.5 258.30L816.5 259.95L817.5 259.95L817.5 259.95L818.5 259.95L818.5 259.50L819.5 259.50L819.5 259.95L820.5 259.95L820.5 259.95L821.5 259.95L821.5 259.50L822.5 259.50L822.5 258.70L823.5 258.70L823.5 259.30L824.5 259.30L824.5 259.70L825.5 259.70L825.5 259.95L826.5 259.95L826.5 259.95L827.5 259.95L827.5 258.30L828.5 258.30L828.5 259.50L829.5 259.50L829.5 259.95L830.5 259.95L830.5 259.95L831.5 259.95L831.5 259.95L832.5 259.95L832.5 259.95L833.5 259.95L833.5 259.95L834.5 259.95L834.5 259.95L835.5 259.95L835.5 259.70L836.5 259.70L836.5 259.95L837.5 259.95L837.5 259.95L838.5 259.95L838.5 259.95L839.5 259.95L839.5 258.30L840.5 258.30L840.5 258.70L841.5 258.70L841.5 259.30L842.5 259.30L842.5 259.95L843.5 259.95L843.5 259.95L844.5 259.95L844.5 259.50L845.5 259.50L845.5 259.95L846.5 259.95L846.5 259.95L847.5 259.95L847.5 259.95L848.5 259.95L848.5 259.95L849.5 259.95L849.5 259.70L850.5 259.70L850.5 259.95L851.5 259.95L851.5 259.95L852.5 259.95L852.5 259.95L853.5 259.95L853.5 259.95L854.5 259.95L854.5 259.95L855.5 259.95L855.5 259.95L856.5 259.95L856.5 259.30L857.5 259.30L857.5 259.95L858.5 259.95L858.5 259.95L859.5 259.95L859.5 259.70L860.5 259.70L860.5 259.95L861.5 259.95L861.5 259.00L862.5 259.00L862.5 259.50L863.5 259.50L863.5 259.95L864.5 259.95L864.5 259.30L865.5 259.30L865.5 259.50L866.5 259.50L866.5 259.70L867.5 259.70L867.5 259.95L868.5 259.95L868.5 259.50L869.5 259.50L869.5 259.30L870.5 259.30L870.5 259.95L871.5 259.95L871.5 258.30L872.5 258.30L872.5 259.95L873.5 259.95L873.5 259.95L874.5 259.95L874.5 259.95L875.5 259.95L875.5 259.95L876.5 259.95L876.5 259.95L877.5 259.95L877.5 259.95L878.5 259.95L878.5 259.95L879.5 259.95L879.5 259.00L880.5 259.00L880.5 259.95L881.5 259.95L881.5 259.70L882.5 259.70L882.5 259.95L883.5 259.95L883.5 259.95L884.5 259.95L884.5 259.30L885.5 259.30L885.5 259.50L886.5 259.50L886.5 259.70L887.5 259.70L887.5 259.95L888.5 259.95L888.5 259.95L889.5 259.95L889.5 259.30L890.5 259.30L890.5 259.30L891.5 259.30L891.5 259.95L892.5 259.95L892.5 259.95L893.5 259.95L893.5 259.95L894.5 259.95L894.5 259.00L895.5 259.00L895.5 259.50L896.5 259.50L896.5 259.95L897.5 259.95L897.5 257.10L898.5 257.10L898.5 259.95L899.5 259.95L899.5 259.95L900.5 259.95L900.5 259.95L901.5 259.95L901.5 259.30L902.5 259.30L902.5 258.70L903.5 258.70L903.5 259.50L904.5 259.50L904.5 259.30L905.5 259.30L905.5 259.95L906.5 259.95L906.5 259.30L907.5 259.30L907.5 257.10L908.5 257.10L908.5 259.70L909.5 259.70L909.5 259.95L910.5 259.95L910.5 259.95L911.5 259.95L911.5 259.95L912.5 259.95L912.5 258.30L913.5 258.30L913.5 259.95L914.5 259.95L914.5 259.95L915.5 259.95L915.5 259.00L916.5 259.00L916.5 258.70L917.5 258.70L917.5 259.50L918.5 259.50L918.5 258.30L919.5 258.30L919.5 258.30L920.5 258.30L920.5 259.30L921.5 259.30L921.5 259.95L922.5 259.95L922.5 259.30L923.5 259.30L923.5 259.95L924.5 259.95L924.5 259.95L925.5 259.95L925.5 259.00L926.5 259.00L926.5 259.50L927.5 259.50L927.5 259.50L928.5 259.50L928.5 259.70L929.5 259.70L929.5 259.70L930.5 259.70L930.5 259.95L931.5 259.95L931.5 259.95L932.5 259.95L932.5 259.95L933.5 259.95L933.5 258.70L934.5 258.70L934.5 256.30L935.5 256.30L935.5 259.95L936.5 259.95L936.5 259.95L937.5 259.95L937.5 259.30L938.5 259.30L938.5 259.95L939.5 259.95L939.5 259.95L940.5 259.95L940.5 259.95L941.5 259.95L941.5 258.70L942.5 258.70L942.5 259.95L943.5 259.95L943.5 258.30L944.5 258.30L944.5 259.00L945.5 259.00L945.5 258.30L946.5 258.30L946.5 259.00L947.5 259.00L947.5 259.95L948.5 259.95L948.5 259.95L949.5 259.95L949.5 259.95L950.5 259.95L950.5 258.30L951.3 258.30L951.3 260.5Z"/>
</svg>
<svg class="abs" style="left:0;top:196px" width="1024" height="72" viewBox="0 196 1024 72"><g stroke="#909090" stroke-width="1" fill="none">
<path d="M12.9 197.2v4.5M247.5 197.2v4.5M482 197.2v4.5M716.6 197.2v4.5M951.1 197.2v4.5"/>
<path d="M12.9 260.6v4.4M247.5 260.6v4.4M482 260.6v4.4M716.6 260.6v4.4M951.1 260.6v4.4"/></g></svg>
<div class="tick" style="left:13.1px;top:204.2px">0</div>
<div class="tick" style="left:227.4px;top:204.2px;width:40px;text-align:center">25000</div>
<div class="tick" style="left:461.9px;top:204.2px;width:40px;text-align:center">50000</div>
<div class="tick" style="left:696.5px;top:204.2px;width:40px;text-align:center">75000</div>
<div class="tick" style="left:911.5px;top:204.2px;width:40px;text-align:right">99999</div>
<div class="tick" style="left:13.1px;top:268px">0</div>
<div class="tick" style="left:227.4px;top:268px;width:40px;text-align:center">25000</div>
<div class="tick" style="left:461.9px;top:268px;width:40px;text-align:center">50000</div>
<div class="tick" style="left:696.5px;top:268px;width:40px;text-align:center">75000</div>
<div class="tick" style="left:911.5px;top:268px;width:40px;text-align:right">99999</div>
<!-- round buttons right -->
<svg class="abs" style="left:956px;top:184px" width="62" height="94" viewBox="956 184 62 94">
  <g fill="#fff" stroke="#b5b5b5" stroke-width="1.45">
    <circle cx="972.6" cy="199.1" r="10.6"/><circle cx="1000.1" cy="199.1" r="10.6"/>
    <circle cx="972.6" cy="234.8" r="10.6"/><circle cx="1000.1" cy="234.8" r="10.6"/>
    <circle cx="972.6" cy="261.9" r="10.6" fill="#bcdcf9"/><circle cx="1000.1" cy="261.9" r="10.6"/>
  </g>
  <path d="M967.4 197.5h10.4l-5.2 4.7z" fill="#3a3a3a"/>
  <g transform="translate(984 184) scale(0.04686)" stroke="#1a1a1a" stroke-width="19" fill="#fff" stroke-linejoin="round">
    <path d="M240 264L300 242H462Q494 244 494 267Q494 290 462 292H405Q432 300 430 320Q437 335 428 350Q430 368 415 378Q405 398 375 392L330 385H240Z"/>
    <path d="M318 292H405M352 321H428M345 350H426M338 379H412M300 300Q330 320 322 372" fill="none" stroke-width="14"/>
    <rect x="186" y="256" width="50" height="128" fill="#111" stroke="none"/>
  </g>
  <g font-family="Liberation Serif,serif" font-size="13" fill="#111" text-anchor="middle">
    <text x="972.7" y="239.1">R</text><text x="999.9" y="239.1">G</text>
    <text x="972.6" y="266.2">M</text><text x="999.9" y="266.2">F</text>
  </g>
</svg>
<!-- splitter -->
<svg class="abs" style="left:0;top:280px" width="1024" height="12" viewBox="0 280 1024 12"><rect x="0" y="282.2" width="1024" height="8.2" fill="#e3e3e3"/><rect x="0" y="282.9" width="1024" height="6.9" fill="#fbfbfb"/><circle cx="512" cy="286.3" r="2" fill="#d9d9d9" stroke="#cbcbcb" stroke-width=".6"/></svg>
<!-- script toolbar -->
<div class="lbl" style="left:108.3px;top:298.5px;line-height:13px">Input Commands:</div>
<div class="lbl" style="left:560.3px;top:298.5px;line-height:13px">Run Output:</div>
<svg class="abs" style="left:0;top:294px" width="700" height="24" viewBox="0 294 700 24" id="tbicons">
  <circle cx="19.95" cy="304.7" r="7.05" fill="#f3f4f3" stroke="#d6d6d6" stroke-width="1.1"/>
  <g fill="#fff" stroke="#b9b9b9" stroke-width="1.2">
    <circle cx="38.4" cy="304.7" r="7.05"/><circle cx="56.85" cy="304.7" r="7.05"/><circle cx="75.3" cy="304.7" r="7.05"/><circle cx="93.6" cy="304.7" r="7.05"/>
    <circle cx="527.2" cy="304.7" r="7.05"/><circle cx="545.6" cy="304.7" r="7.05"/><circle cx="646.75" cy="304.7" r="7.05"/><circle cx="665.3" cy="304.7" r="7.05"/>
  </g>
  <g transform="translate(10 295) scale(0.0390625)">
    <polygon points="150,272 176,254 201,302 332,128 356,142 196,352" fill="#72c872"/>
    <g fill="#111"><rect x="645" y="150" width="60" height="18"/><rect x="745" y="150" width="45" height="20"/><polygon points="685,160 730,195 825,195 825,212 722,212 672,172"/><rect x="720" y="230" width="80" height="20"/><rect x="690" y="287" width="25" height="18"/><rect x="745" y="287" width="80" height="18"/><rect x="640" y="337" width="60" height="18"/><rect x="720" y="337" width="30" height="18"/></g>
  </g>
  <text x="56.8" y="308.5" text-anchor="middle" font-family="Liberation Serif,serif" font-weight="bold" font-size="11.6" fill="#1c1c26">?</text>
  <path d="M72.1 302.3l6.4 2.4l-6.4 2.6" fill="none" stroke="#bf22a8" stroke-width="1.35"/>
  <g fill="#111"><rect x="88.9" y="301.7" width="4.1" height="1.2"/><rect x="94" y="301.7" width="4.8" height="1.2"/><rect x="88.9" y="306.85" width="4.1" height="1.2"/><rect x="94" y="306.85" width="4.8" height="1.2"/></g>
  <g fill="#3a3a3a"><rect x="88.9" y="303.85" width="4.1" height=".9"/><rect x="94" y="303.85" width="4.8" height=".9"/><rect x="88.9" y="305.2" width="4.1" height=".9"/><rect x="94" y="305.2" width="4.8" height=".9"/></g>
  <path d="M524.05 302l6.05 5.9M530.1 302l-6.05 5.9" stroke="#e0261c" stroke-width="1.45" fill="none"/>
  <path d="M544.35 301.05h2.65v5.25h1.9l-3.25 2.6l-3.25-2.6h1.95z" fill="#383838"/>
  <path d="M643 303.2h7.45l-3.72 3.75z" fill="#333"/>
  <g fill="#111"><rect x="662.1" y="300.9" width="1.85" height="7.8" rx=".4"/><rect x="664.8" y="303.4" width="1.35" height="5.3" rx=".4"/><rect x="667.05" y="304.95" width="1.75" height="3.75" rx=".4"/></g>
</svg>
<!-- script pane -->
<div class="pane" style="left:12px;top:315px;width:500px;height:296px">
<svg class="abs" style="left:0;top:80px" width="498" height="24" viewBox="0 80 498 24"><rect x="141.15" y="87.15" width="352.95" height="10.45" fill="#b3d7fe"/></svg>
<pre>initialize() {
 initializeMutationRate(<span class="n">1e-6</span>);
 initializeMutationType(<span class="s">"m1"</span>, <span class="n">0.5</span>, <span class="s">"f"</span>, <span class="n">0.05</span>);
 initializeGenomicElementType(<span class="s">"g1"</span>, <span class="i">m1</span>, <span class="n">1.0</span>);
 initializeGenomicElement(<span class="i">g1</span>, <span class="n">0</span>, <span class="n">99999</span>);
 initializeRecombinationRate(<span class="n">1e-8</span>);
}
<span class="n">1</span> {
<span class="i">sim</span>.addSubpop(<span class="s">"p1"</span>, <span class="n">1000</span>);
}
<span class="n">6000</span> late() {
<span class="c">// Calculate the fixation probability for a beneficial mutation</span>
 s = <span class="n">0.05</span>;
 N = <span class="n">1000</span>;
 p_fix = (<span class="n">1</span> - exp(-<span class="n">2</span> * s)) / (<span class="n">1</span> - exp(-<span class="n">4</span> * N * s));
<span class="c">// Calculate the expected number of fixed mutations</span>
 n_gens = <span class="n">1000</span>; <span class="c">// first 5000 generations were burn-in</span>
 mu = <span class="n">1e-6</span>;
 locus_size = <span class="n">100000</span>;
 expected = mu * locus_size * n_gens * <span class="n">2</span> * N * p_fix;
<span class="c">// Figure out the actual number of fixations after burn-in</span>
 subs = <span class="i">sim</span>.substitutions;
 actual = sum(subs.fixationGeneration &gt;= <span class="n">5000</span>);
<span class="c">// Print a summary of our findings</span>
 cat(<span class="s">"P(fix) = "</span> + p_fix + <span class="s">"\n"</span>);
 cat(<span class="s">"Expected fixations: "</span> + expected + <span class="s">"\n"</span>);
 cat(<span class="s">"Actual fixations: "</span> + actual + <span class="s">"\n"</span>);
 cat(<span class="s">"Ratio, actual/expected: "</span> + (actual/expected) + <span class="s">"\n"</span>);</pre>
</div>
<svg class="abs" style="left:511px;top:448px" width="9" height="9" viewBox="511 448 9 9"><circle cx="515.3" cy="452.4" r="2" fill="#d9d9d9" stroke="#cbcbcb" stroke-width=".6"/></svg>
<!-- output pane -->
<div class="pane" style="left:519px;top:315px;width:493px;height:296px">
<pre><span class="c">// Initial random seed:</span>
1525199946177

<span class="c">// RunInitializeCallbacks():</span>
initializeMutationRate(1e-06);
initializeMutationType(1, 0.5, "f", 0.05);
initializeGenomicElementType(1, <span class="k">m1</span>, 1);
initializeGenomicElement(<span class="i">g1</span>, 0, 99999);
initializeRecombinationRate(1e-08);

<span class="c">// Starting run at generation &lt;start&gt;:</span>
1</pre>
</div>
<!-- status bar -->
<div class="abs" style="left:12px;top:610px;width:1000px;height:18px;background:#fff;border:1px solid #cdcdcd"></div>

</body>
</html>
